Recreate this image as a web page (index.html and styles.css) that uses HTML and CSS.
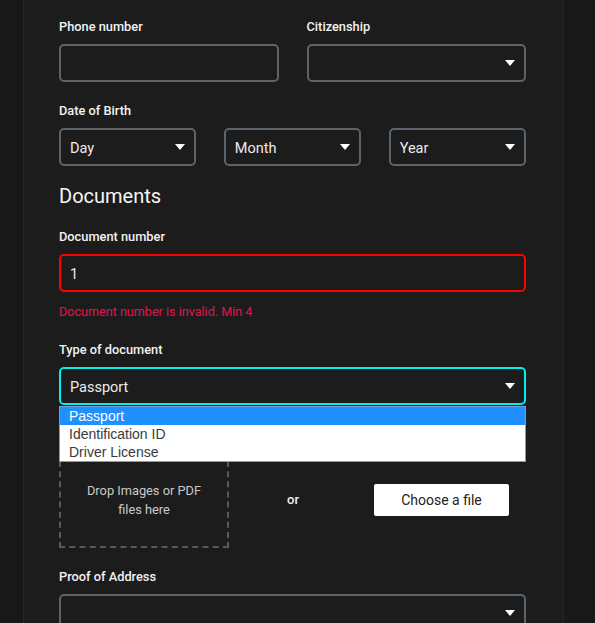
FILE: index.html
```html
<!DOCTYPE html>
<html lang="en">
<head>
<meta charset="utf-8">
<title>Documents form</title>
<link rel="stylesheet" href="styles.css">
</head>
<body>
<div class="page">
  <div class="panel">
    <div class="row two">
      <div class="field">
        <label class="label">Phone number</label>
        <div class="input"></div>
      </div>
      <div class="field">
        <label class="label">Citizenship</label>
        <div class="input select"><span class="value"></span><span class="arrow"></span></div>
      </div>
    </div>

    <div class="field gap-top">
      <label class="label">Date of Birth</label>
      <div class="row three">
        <div class="input select"><span class="value">Day</span><span class="arrow"></span></div>
        <div class="input select"><span class="value">Month</span><span class="arrow"></span></div>
        <div class="input select"><span class="value">Year</span><span class="arrow"></span></div>
      </div>
    </div>

    <h2 class="heading">Documents</h2>

    <div class="field">
      <label class="label">Document number</label>
      <div class="input invalid"><span class="value">1</span></div>
      <div class="error">Document number is invalid. Min 4</div>
    </div>

    <div class="field type-field">
      <label class="label">Type of document</label>
      <div class="input select focused"><span class="value">Passport</span><span class="arrow"></span></div>
      <ul class="dropdown">
        <li class="option active">Passport</li>
        <li class="option">Identification ID</li>
        <li class="option">Driver License</li>
      </ul>
    </div>

    <div class="upload">
      <div class="dropzone">Drop Images or PDF<br>files here</div>
      <div class="or">or</div>
      <div class="btn-cell"><button class="choose">Choose a file</button></div>
    </div>

    <div class="field gap-top">
      <label class="label">Proof of Address</label>
      <div class="input select"><span class="value"></span><span class="arrow"></span></div>
    </div>
  </div>
</div>
</body>
</html>
```

FILE: styles.css
```css
html, body {
  margin: 0;
  padding: 0;
  background: #181818;
  font-family: Roboto, "Liberation Sans", Arial, sans-serif;
  color: #f2f2f2;
}

.page {
  height: 623px;
  overflow: hidden;
  padding-left: 23px;
}

.panel {
  width: 467px;
  min-height: 700px;
  background: #1c1c1c;
  border-left: 1px solid #262626;
  border-right: 1px solid #262626;
  padding: 17px 37px 0 35px;
}

.row.two {
  display: grid;
  grid-template-columns: 1fr 1fr;
  column-gap: 28px;
}

.row.three {
  display: grid;
  grid-template-columns: 1fr 1fr 1fr;
  column-gap: 27.5px;
}

.field {
  display: flex;
  flex-direction: column;
}

.gap-top {
  margin-top: 19px;
}

.label {
  display: block;
  font-size: 12.8px;
  font-weight: 500;
  line-height: 19px;
  margin-bottom: 8px;
  color: #f2f2f2;
}

.input {
  box-sizing: border-box;
  height: 38px;
  border: 2px solid #5a646c;
  border-radius: 5px;
  display: flex;
  align-items: center;
  padding: 2px 9px 0 9px;
  font-size: 14.5px;
  color: #ececec;
}

.input .value {
  flex: 1;
}

.arrow {
  width: 0;
  height: 0;
  border-left: 5px solid transparent;
  border-right: 5px solid transparent;
  border-top: 6px solid #ffffff;
  margin-bottom: 2px;
}

.input.invalid {
  border-color: #ff0000;
}

.input.focused {
  border-color: #00f0f0;
}

.heading {
  margin: 18px 0 19px;
  font-size: 20px;
  font-weight: 400;
  line-height: 24px;
  color: #f6f6f6;
}

.error {
  margin-top: 11px;
  font-size: 12.6px;
  line-height: 18px;
  color: #e3134f;
}

.type-field {
  position: relative;
  margin-top: 19px;
}

.dropdown {
  position: absolute;
  left: 0;
  right: 0;
  top: 66px;
  margin: 0;
  padding: 0;
  list-style: none;
  background: #ffffff;
  border: 1px solid #7a9ad4;
  z-index: 2;
}

.option {
  height: 18px;
  line-height: 18px;
  padding-left: 9px;
  font-family: "Liberation Sans", Arial, sans-serif;
  font-size: 14px;
  color: #3a3a3a;
}

.option.active {
  background: #1e90ff;
  color: #ffffff;
}

.upload {
  display: grid;
  grid-template-columns: 170px 128px 1fr;
  align-items: center;
  margin-top: 46px;
}

.dropzone {
  box-sizing: border-box;
  height: 97px;
  border: 2px dashed #555a5e;
  display: flex;
  align-items: center;
  justify-content: center;
  text-align: center;
  font-size: 12.8px;
  line-height: 19px;
  color: #c9c9c9;
}

.or {
  text-align: center;
  font-size: 13px;
  font-weight: 500;
  color: #f0f0f0;
}

.btn-cell {
  display: flex;
  justify-content: center;
}

.choose {
  width: 135px;
  height: 32px;
  margin-top: 1px;
  border: none;
  border-radius: 2px;
  background: #ffffff;
  color: #222222;
  font-family: Roboto, "Liberation Sans", Arial, sans-serif;
  font-size: 14px;
  padding: 0;
}
```
